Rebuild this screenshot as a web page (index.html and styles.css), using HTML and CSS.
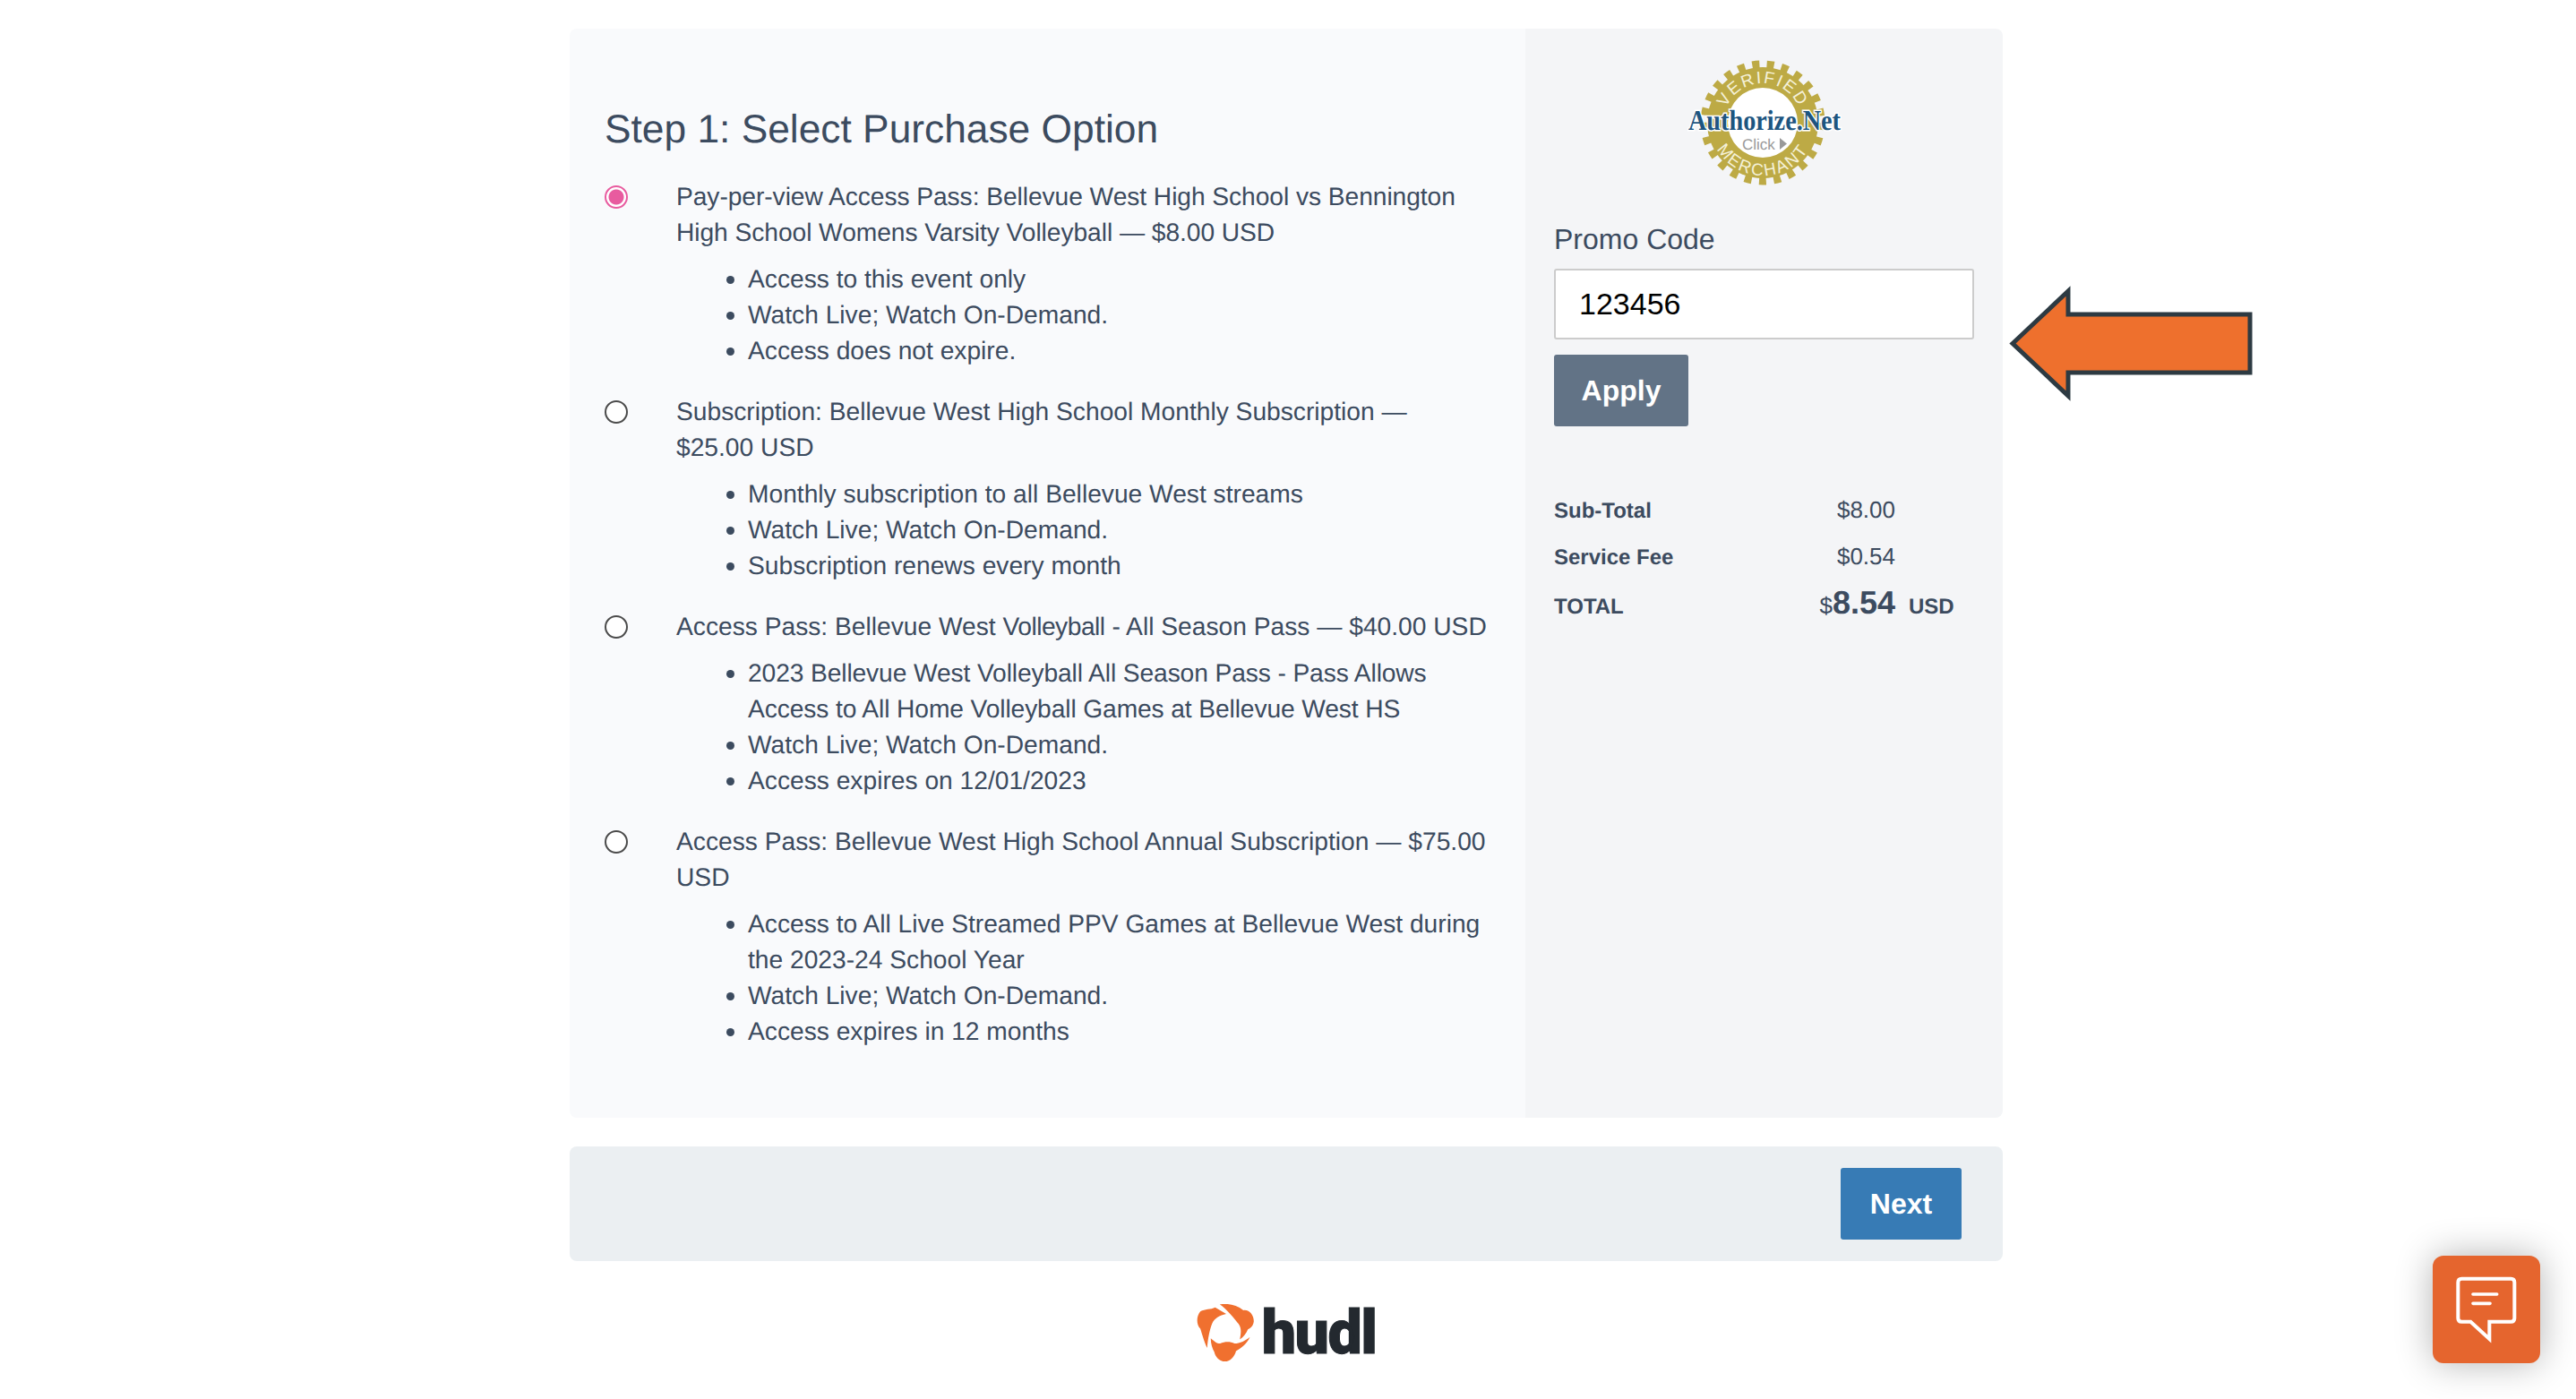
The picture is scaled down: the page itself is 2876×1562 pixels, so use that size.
FILE: index.html
```html
<!DOCTYPE html>
<html lang="en">

<head>
    <meta charset="utf-8">
    <meta name="viewport" content="width=device-width, initial-scale=1.0">
    <title>Select Purchase Option</title>
    <link rel="stylesheet" href="styles.css">
</head>

<body>
    <div class="page">
        <section class="card">
            <div class="options">
                <h2>Step 1: Select Purchase Option</h2>

                <article class="option">
                    <span class="radio valgt"></span>
                    <div>
                        <p class="tight-first">Pay-per-view Access Pass: Bellevue West High School vs Bennington High School Womens Varsity Volleyball — $8.00 USD</p>
                        <ul>
                            <li>Access to this event only</li>
                            <li>Watch Live; Watch On-Demand.</li>
                            <li>Access does not expire.</li>
                        </ul>
                    </div>
                </article>

                <article class="option">
                    <span class="radio"></span>
                    <div>
                        <p>Subscription: Bellevue West High School Monthly Subscription — $25.00 USD</p>
                        <ul>
                            <li>Monthly subscription to all Bellevue West streams</li>
                            <li>Watch Live; Watch On-Demand.</li>
                            <li>Subscription renews every month</li>
                        </ul>
                    </div>
                </article>

                <article class="option">
                    <span class="radio"></span>
                    <div>
                        <p>Access Pass: Bellevue West <span class="tight">Volleyball</span> - All Season Pass — $40.00 USD</p>
                        <ul>
                            <li class="tight-line">2023 Bellevue West Volleyball All Season Pass - Pass Allows Access to All Home Volleyball Games at Bellevue West HS</li>
                            <li>Watch Live; Watch On-Demand.</li>
                            <li>Access expires on 12/01/2023</li>
                        </ul>
                    </div>
                </article>

                <article class="option">
                    <span class="radio"></span>
                    <div>
                        <p>Access Pass: Bellevue West High School Annual Subscription — $75.00 USD</p>
                        <ul>
                            <li>Access to All Live Streamed PPV Games at Bellevue West during the 2023-24 School Year</li>
                            <li>Watch Live; Watch On-Demand.</li>
                            <li>Access expires in 12 months</li>
                        </ul>
                    </div>
                </article>
            </div>

            <aside class="summary">
                <svg class="seal" viewBox="0 0 200 144" width="200" height="144">
                    <circle cx="98" cy="72" r="65" fill="none" stroke="#bdaa45" stroke-width="9" stroke-dasharray="8 8.34"/>
                    <circle cx="98" cy="72" r="62" fill="#bdaa45"/>
                    <circle cx="98" cy="72" r="39" fill="#fff"/>
                    <defs>
                        <path id="sealTop" d="M54 72 A44 44 0 0 1 142 72"/>
                        <path id="sealBottom" d="M39 72 A59 59 0 0 0 157 72"/>
                    </defs>
                    <text class="seal-ring"><textPath href="#sealTop" startOffset="50%" text-anchor="middle">VERIFIED</textPath></text>
                    <text class="seal-ring"><textPath href="#sealBottom" startOffset="50%" text-anchor="middle">MERCHANT</textPath></text>
                    <text class="seal-name" x="100" y="80" text-anchor="middle" textLength="170" lengthAdjust="spacingAndGlyphs">Authorize.Net</text>
                    <text class="seal-click" x="75" y="102">Click</text>
                    <path d="M117 89 L125 95.5 L117 102 Z" fill="#999"/>
                </svg>

                <label class="promo-label" for="promo">Promo Code</label>
                <input class="promo-input" id="promo" type="text" value="123456">
                <button class="btn btn-apply">Apply</button>

                <div class="totals">
                    <b>Sub-Total</b>
                    <span class="amount">$8.00</span>
                    <span></span>
                    <b>Service Fee</b>
                    <span class="amount">$0.54</span>
                    <span></span>
                    <b class="upper">TOTAL</b>
                    <span class="amount">$<strong>8.54</strong></span>
                    <b class="upper">USD</b>
                </div>
            </aside>
        </section>

        <div class="actions">
            <button class="btn btn-next">Next</button>
        </div>

        <footer class="brand">
            <svg class="brand-mark" viewBox="113 107 192 193" width="64" height="64">
                <path d="M175 118 L212 140 C190 145 172 155 165 172 C157 190 150 225 148 255 C137 232 130 205 125 190 C112 178 110 150 125 132 C140 122 160 126 175 118 Z" fill="#f0702f"/>
                <path d="M190 108 C215 104 245 108 270 128 C290 125 305 145 305 165 C303 182 292 190 285 192 C280 205 270 218 258 226 C262 205 264 188 254 174 C240 158 215 125 190 108 Z" fill="#f0702f"/>
                <path d="M160 222 C172 232 180 240 192 240 C205 234 225 232 240 240 C258 240 278 230 292 218 C282 240 265 255 245 265 C240 285 225 300 208 300 C190 300 175 285 172 268 C165 255 160 240 160 222 Z" fill="#f0702f"/>
            </svg>
            <span class="brand-name">hudl</span>
        </footer>
    </div>

    <!-- annotation arrow on top of the screenshot -->
    <svg class="arrow" viewBox="0 0 280 136" width="280" height="136">
        <path d="M7 67.5 L69 9 V35 H272 V100 H69 V126 Z" fill="#ee702d" stroke="#2d3a42" stroke-width="5"/>
    </svg>

    <button class="chat">
        <svg viewBox="108 66 360 360" width="120" height="120">
            <path d="M205 143 H370 Q382 143 382 155 V275 Q382 287 370 287 H298 V345 L235 287 H205 Q193 287 193 275 V155 Q193 143 205 143 Z" fill="none" stroke="#fff" stroke-width="12"/>
            <path d="M243 195 H323 M243 226 H300" fill="none" stroke="#fff" stroke-width="11" stroke-linecap="round"/>
        </svg>
    </button>
</body>

</html>
```

FILE: styles.css
```css
* {
    box-sizing: border-box;
}

body {
    margin: 0;
    background: #fff;
    color: #3c4b5f;
    font-family: "Liberation Sans", Arial, sans-serif;
    font-size: 28.2px;
    line-height: 40px;
    text-rendering: geometricPrecision;
}

.page {
    width: 1600px;
    margin: 32px 0 0 636px;
}

.card {
    display: flex;
    height: 1216px;
    border-radius: 8px;
    overflow: hidden;
}

.options {
    flex: none;
    width: 1067px;
    padding: 87px 39px 0;
    background: #f9fafc;
}

h2 {
    margin: 0 0 28px;
    font-size: 44.3px;
    font-weight: 400;
    line-height: 52px;
}

.option {
    display: grid;
    grid-template-columns: 80px 905px;
    margin-bottom: 28px;
}

.option p {
    margin: 0;
}

.option ul {
    margin: 12px 0 0;
    padding: 0 0 0 80px;
}

.tight {
    letter-spacing: -0.5px;
}

.tight-line {
    letter-spacing: -0.11px;
}

.tight-first {
    letter-spacing: -0.06px;
}

.radio {
    width: 26px;
    height: 26px;
    margin-top: 8px;
    border: 2px solid #4b4b4b;
    border-radius: 50%;
    background: #fff;
}

.radio.valgt {
    border-color: #e85b9f;
    background: radial-gradient(circle, #e85b9f 0 8px, #fff 9px);
}

.summary {
    flex: 1;
    min-width: 0;
    padding: 33px 32px 0;
    background: #f4f5f7;
}

.seal {
    display: block;
    margin: 0 auto;
}

.seal-ring {
    fill: #f5f1d8;
    font-size: 19px;
    letter-spacing: 2px;
}

.seal-name {
    fill: #1d5580;
    stroke: #fff;
    stroke-width: 3px;
    paint-order: stroke;
    font-family: "Liberation Serif", serif;
    font-size: 32px;
    font-weight: 700;
}

.seal-click {
    fill: #999;
    font-size: 17px;
}

.promo-label {
    display: block;
    margin-top: 36px;
    font-size: 32px;
    line-height: 44px;
}

.promo-input {
    display: block;
    width: 469px;
    height: 79px;
    margin-top: 11px;
    padding: 0 26px;
    border: 2px solid #ccc;
    border-radius: 3px;
    background: #fff;
    color: #000;
    font-family: inherit;
    font-size: 34px;
}

.btn {
    height: 80px;
    border: 0;
    border-radius: 3px;
    color: #fff;
    font-family: inherit;
    font-size: 32px;
    font-weight: 700;
    text-rendering: inherit;
}

.btn-apply {
    display: block;
    width: 150px;
    margin-top: 17px;
    background: #627386;
}

.totals {
    display: grid;
    grid-template-columns: 250px 131px auto;
    grid-auto-rows: 52px;
    align-items: baseline;
    margin-top: 67px;
    font-size: 24px;
    line-height: 52px;
}

.amount {
    font-size: 26px;
    text-align: right;
}

.amount strong {
    font-size: 36px;
}

.totals .upper:last-child {
    margin-left: 15px;
}

.actions {
    display: flex;
    justify-content: flex-end;
    height: 128px;
    margin-top: 32px;
    padding: 24px 46px 24px 0;
    border-radius: 8px;
    background: #ebeff2;
}

.btn-next {
    width: 135px;
    background: #377bb5;
}

.brand {
    display: flex;
    justify-content: center;
    align-items: center;
    gap: 9px;
    margin-top: 48px;
}

.brand-name {
    color: #23292f;
    font-family: Roboto, sans-serif;
    font-size: 68px;
    font-weight: 900;
    letter-spacing: -1.5px;
    line-height: 64px;
    -webkit-text-stroke: 1px #23292f;
}

.arrow {
    position: absolute;
    left: 2240px;
    top: 316px;
}

.chat {
    position: fixed;
    left: 2716px;
    top: 1402px;
    width: 120px;
    height: 120px;
    padding: 0;
    border: 0;
    border-radius: 12px;
    background: #e5652e;
    box-shadow: 0 0 40px rgba(0, 0, 0, 0.3);
}

.chat svg {
    display: block;
}
```
